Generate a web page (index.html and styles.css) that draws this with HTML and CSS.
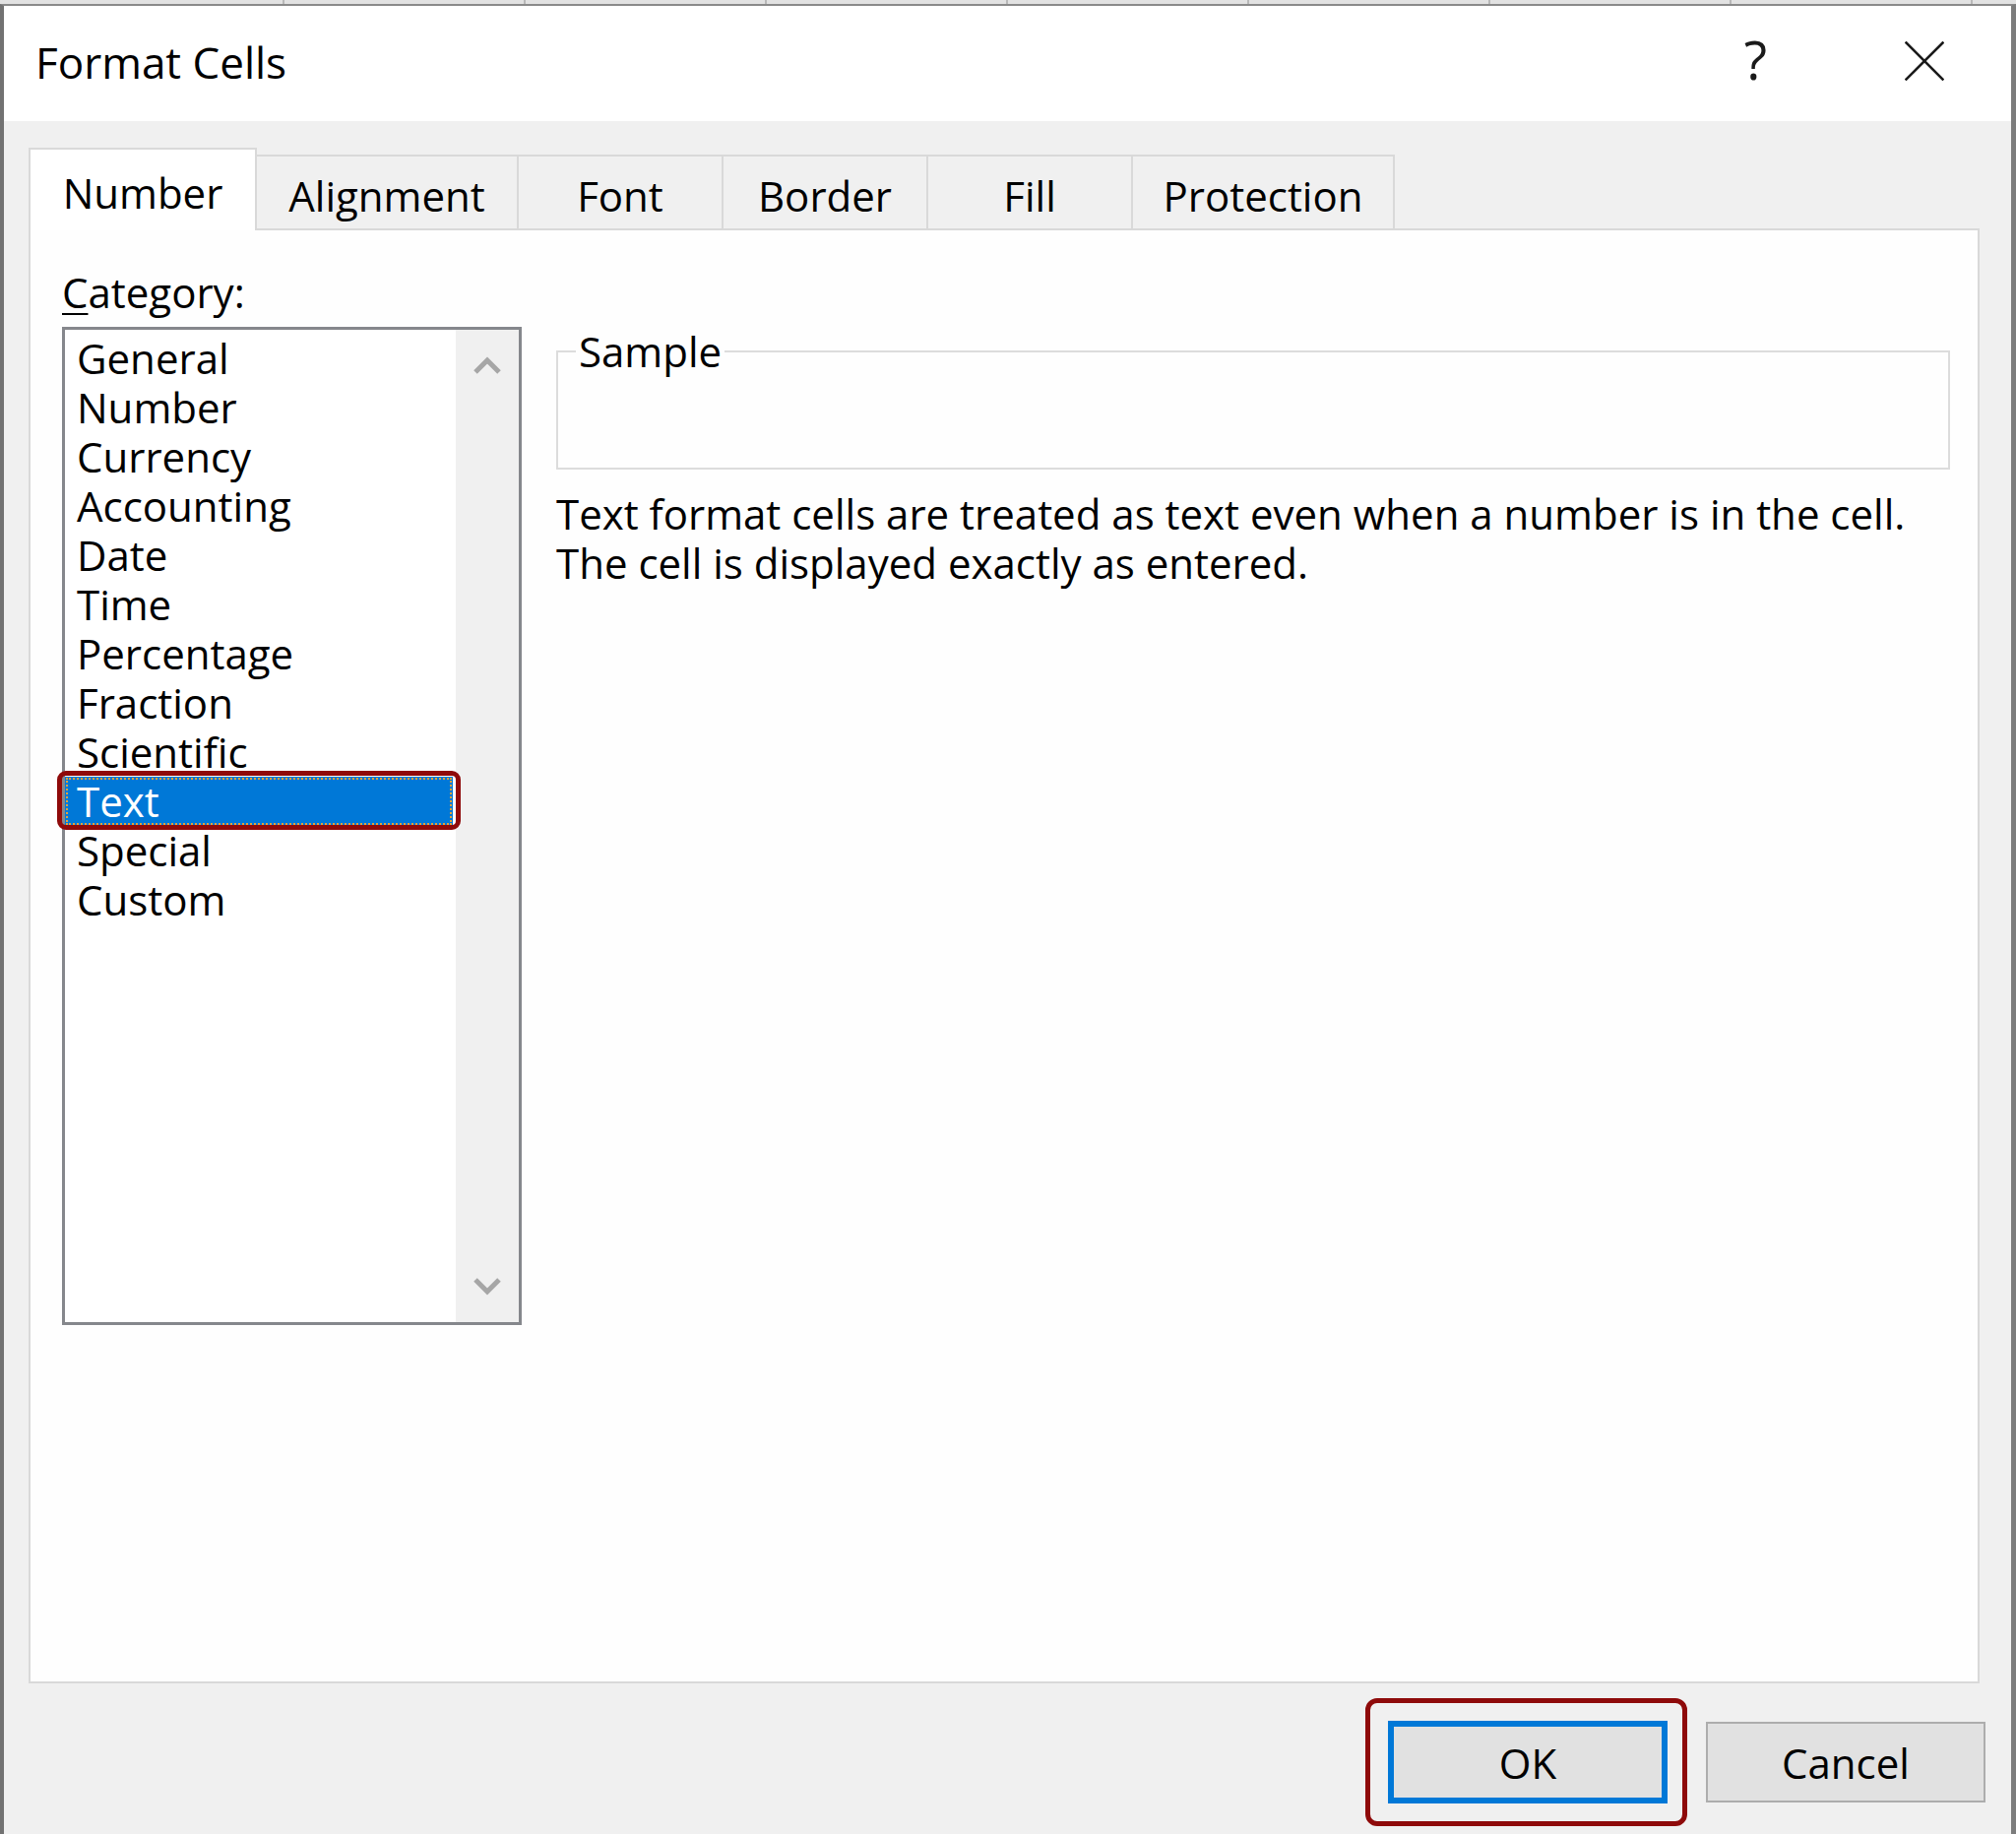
FILE: index.html
```html
<!DOCTYPE html>
<html lang="en">
<head>
<meta charset="utf-8">
<title>Format Cells</title>
<link rel="stylesheet" href="styles.css">
</head>
<body>
<div class="screen">
  <div class="strip"></div>
  <div class="dialog">
    <div class="titlebar">
      <div class="title">Format Cells</div>
      <span class="help">?</span>
      <svg class="close" width="40" height="40" viewBox="0 0 40 40" aria-label="Close">
        <line x1="1.5" y1="1.5" x2="38.5" y2="38.5"/>
        <line x1="38.5" y1="1.5" x2="1.5" y2="38.5"/>
      </svg>
    </div>
    <div class="content">
      <div class="tabs">
        <div class="tab selected w-number">Number</div>
        <div class="tab w-wide">Alignment</div>
        <div class="tab w-mid">Font</div>
        <div class="tab w-mid">Border</div>
        <div class="tab w-mid">Fill</div>
        <div class="tab w-wide">Protection</div>
      </div>
      <div class="panel">
        <div class="col-left">
          <div class="label"><u>C</u>ategory:</div>
          <div class="listbox">
            <ul class="items">
              <li>General</li>
              <li>Number</li>
              <li>Currency</li>
              <li>Accounting</li>
              <li>Date</li>
              <li>Time</li>
              <li>Percentage</li>
              <li>Fraction</li>
              <li>Scientific</li>
              <li class="sel">Text</li>
              <li>Special</li>
              <li>Custom</li>
            </ul>
            <div class="scrollbar">
              <div class="arrow">
                <svg width="30" height="22" viewBox="0 0 30 22"><polyline points="3,18 15,6 27,18"/></svg>
              </div>
              <div class="arrow">
                <svg width="30" height="22" viewBox="0 0 30 22"><polyline points="3,4 15,16 27,4"/></svg>
              </div>
            </div>
          </div>
        </div>
        <div class="col-right">
          <fieldset class="sample">
            <legend>Sample</legend>
          </fieldset>
          <p class="desc"><span class="line">Text format cells are treated as text even when a number is in the cell.</span><br><span class="line">The cell is displayed exactly as entered.</span></p>
        </div>
      </div>
      <div class="buttons">
        <button class="btn ok">OK</button>
        <button class="btn cancel">Cancel</button>
      </div>
    </div>
  </div>
</div>
</body>
</html>
```

FILE: styles.css
```css
html, body {
  margin: 0;
  padding: 0;
  background: #f0f0f0;
}

.screen {
  width: 2048px;
  height: 1863px;
  overflow: hidden;
  background: #f0f0f0;
  font-family: "Open Sans", "Noto Sans", "Liberation Sans", sans-serif;
  color: #000;
}

.strip {
  height: 4px;
  background-color: #e2e2e2;
  background-image: repeating-linear-gradient(to right, transparent 0 243px, #b8b8b8 243px 245px);
  background-position: 44px 0;
}

.dialog {
  height: 1859px;
  box-sizing: border-box;
  border-top: 2px solid #8a8a8a;
  border-left: 4px solid #727272;
  border-right: 5px solid #7c7c7c;
  background: #f0f0f0;
  display: flex;
  flex-direction: column;
}

/* Title bar */
.titlebar {
  height: 117px;
  background: #ffffff;
  display: flex;
  align-items: flex-start;
  padding-right: 68px;
}

.title {
  flex: 1;
  font-size: 44px;
  line-height: 60px;
  padding-top: 27px;
  padding-left: 32px;
}

.help {
  font-size: 54px;
  line-height: 60px;
  margin-top: 24px;
  margin-right: 140px;
  color: #1a1a1a;
}

.close {
  margin-top: 36px;
  stroke: #1a1a1a;
  stroke-width: 2.6;
  stroke-linecap: square;
}

/* Tabs */
.content {
  flex: 1;
  display: flex;
  flex-direction: column;
}

.tabs {
  display: flex;
  align-items: flex-end;
  margin-top: 27px;
  padding-left: 25px;
}

.tab {
  box-sizing: border-box;
  height: 75px;
  border: 2px solid #d9d9d9;
  border-bottom: none;
  border-left: none;
  background: #f0f0f0;
  font-size: 42px;
  line-height: 50px;
  padding-top: 15px;
  text-align: center;
}

.tab.selected {
  height: 84px;
  border-left: 2px solid #d9d9d9;
  background: #ffffff;
  margin-bottom: -2px;
  padding-top: 19px;
  position: relative;
  z-index: 1;
}

.w-number { width: 232px; }
.w-wide { width: 266px; }
.w-mid { width: 208px; }

/* Panel */
.panel {
  box-sizing: border-box;
  height: 1478px;
  margin: 0 32px 0 25px;
  border: 2px solid #d9d9d9;
  background: #fefefe;
  padding: 38px 28px 0 32px;
  display: flex;
  align-items: flex-start;
  gap: 35px;
}

.col-left {
  width: 467px;
}

.label {
  font-size: 42px;
  line-height: 50px;
  margin-bottom: 10px;
}

.label u {
  text-decoration-thickness: 2px;
  text-underline-offset: 5px;
}

.listbox {
  box-sizing: border-box;
  width: 467px;
  height: 1014px;
  border: 3px solid #85878c;
  background: #ffffff;
  display: flex;
}

.items {
  flex: 1;
  list-style: none;
  margin: 0;
  padding: 4px 3px 0 0;
}

.items li {
  height: 50px;
  line-height: 50px;
  font-size: 42px;
  padding-left: 12px;
  position: relative;
  white-space: nowrap;
}

.items li.sel {
  background: #0078d7;
  color: #ffffff;
}

.items li.sel::before {
  content: "";
  position: absolute;
  inset: 1px;
  border: 2px dotted #e3a23c;
}

.items li.sel::after {
  content: "";
  position: absolute;
  top: -6px;
  bottom: -4px;
  left: -8px;
  right: -8px;
  border: 5px solid #8e0a0a;
  border-radius: 9px;
}

.scrollbar {
  width: 64px;
  background: #f0f0f0;
  display: flex;
  flex-direction: column;
  justify-content: space-between;
}

.arrow {
  height: 72px;
  display: flex;
  align-items: center;
  justify-content: center;
}

.arrow svg {
  fill: none;
  stroke: #a6a6a6;
  stroke-width: 5;
}

/* Right column */
.col-right {
  width: 1416px;
  padding-top: 60px;
}

.sample {
  box-sizing: border-box;
  height: 145px;
  margin: 0;
  padding: 0 0 0 18px;
  border: 2px solid #dcdcdc;
}

.sample legend {
  font-size: 42px;
  line-height: 50px;
  padding: 0 3px;
}

.desc {
  margin: 20px 0 0 0;
  font-size: 42px;
  line-height: 50px;
}

.desc .line {
  white-space: nowrap;
}

/* Buttons */
.buttons {
  display: flex;
  justify-content: flex-end;
  align-items: center;
  gap: 39px;
  padding: 38px 26px 0 0;
}

.btn {
  box-sizing: border-box;
  width: 284px;
  height: 82px;
  margin: 0;
  padding: 0;
  background: #e1e1e1;
  border: 2px solid #adadad;
  font-family: "Open Sans", "Noto Sans", "Liberation Sans", sans-serif;
  font-size: 42px;
  color: #000;
  position: relative;
}

.btn.ok {
  height: 84px;
  border: 6px solid #0078d7;
}

.btn.ok::after {
  content: "";
  position: absolute;
  top: -29px;
  bottom: -29px;
  left: -29px;
  right: -26px;
  border: 5px solid #8e0a0a;
  border-radius: 12px;
}
```
